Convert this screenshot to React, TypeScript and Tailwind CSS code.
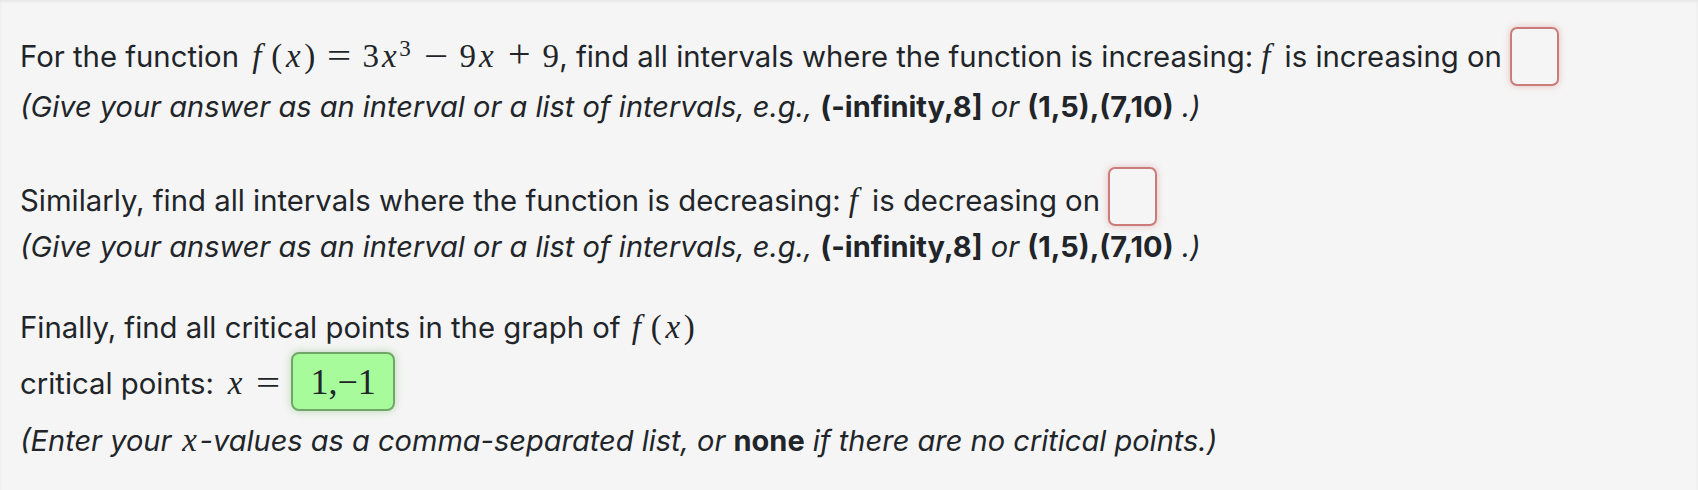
import React from 'react';

// inline math, set in a Times-like serif with Computer-Modern-ish advance widths
const M: React.FC<{ children: React.ReactNode; className?: string }> = ({ children, className = '' }) => (
  <span className={"font-['Liberation_Serif',serif] text-[33px] not-italic " + className}>{children}</span>
);

const F: React.FC<{ alone?: boolean }> = ({ alone }) => (
  <span className={'inline-block italic ' + (alone ? 'w-[15px]' : 'w-[18px]')}>f</span>
);
const X = () => <span className="inline-block w-[20px] text-center italic">x</span>;
const LP = () => <span className="inline-block w-[13px] text-center">(</span>;
const RP = () => <span className="inline-block w-[13px] text-center">)</span>;
const D: React.FC<{ children: React.ReactNode }> = ({ children }) => (
  <span className="inline-block w-[17px] text-center">{children}</span>
);

const Eq = () => <span className="mx-[10px] inline-block w-[26px] scale-x-[1.3] text-center">=</span>;
const Minus = () => <span className="mx-[10px] inline-block w-[26px] scale-x-[1.3] text-center">−</span>;
const Plus = () => <span className="mx-[10px] inline-block w-[26px] text-center text-[40px] leading-none">+</span>;

const EmptyAnswer: React.FC<{ offset?: 'low' | 'high' }> = ({ offset = 'low' }) => (
  <span
    className={
      'ml-[8px] inline-block h-[59px] w-[49px] rounded-[7px] border-2 border-[#c97c79] bg-[#f5f5f5] shadow-[0_0_7px_rgba(200,90,90,0.35)] ' +
      (offset === 'low' ? 'align-[-19px]' : 'align-[-15px]')
    }
  />
);

const Hint: React.FC = () => (
  <div className="text-[29px] italic">
    (Give your answer as an interval or a list of intervals, e.g.,{' '}
    <b className="not-italic font-bold">(-infinity,8]</b> or{' '}
    <b className="not-italic font-bold">(1,5),(7,10)</b> .)
  </div>
);

export default function App() {
  return (
    <div className="min-h-[490px] w-full bg-[#f5f5f5] shadow-[inset_0_2px_3px_rgba(0,0,0,0.06)] px-[20px] pt-[27px] font-['Inter',sans-serif] text-[29.3px] leading-[42px] text-[#212529]">
      <div className="mb-[39px]">
        <div className="whitespace-nowrap">
          For the function{' '}
          <M className="ml-[5px]">
            <F />
            <LP />
            <X />
            <RP />
            <Eq />
            <D>3</D>
            <X />
            <sup className="inline-block w-[14px] text-[23px]">3</sup>
            <Minus />
            <D>9</D>
            <X />
            <Plus />
            <D>9</D>
          </M>
          , find all intervals where the function is increasing:{' '}
          <M>
            <F alone />
          </M>{' '}
          is increasing on
          <EmptyAnswer />
        </div>
        <Hint />
      </div>

      <div className="mb-[38px]">
        <div className="whitespace-nowrap">
          Similarly, find all intervals where the function is decreasing:{' '}
          <M>
            <F alone />
          </M>{' '}
          is decreasing on
          <EmptyAnswer offset="high" />
        </div>
        <Hint />
      </div>

      <div>
        <div>
          Finally, find all critical points in the graph of{' '}
          <M className="ml-[3px]">
            <F />
            <LP />
            <X />
            <RP />
          </M>
        </div>
        <div className="mt-[3px]">
          critical points:{' '}
          <M className="ml-[3px]">
            <X />
            <Eq />
          </M>
          <span className="inline-flex h-[59px] w-[104px] items-center justify-center rounded-[8px] border-2 border-[#70a769] bg-[#a7fb9b] font-['Liberation_Serif',serif] text-[36px] shadow-[0_0_8px_rgba(110,180,100,0.45)]">
            1,−1
          </span>
        </div>
        <div className="mt-[8px] text-[29px] italic">
          (Enter your{' '}
          <M>
            <X />
          </M>
          -values as a comma-separated list, or <b className="not-italic font-bold">none</b> if there are no critical
          points.)
        </div>
      </div>
    </div>
  );
}
